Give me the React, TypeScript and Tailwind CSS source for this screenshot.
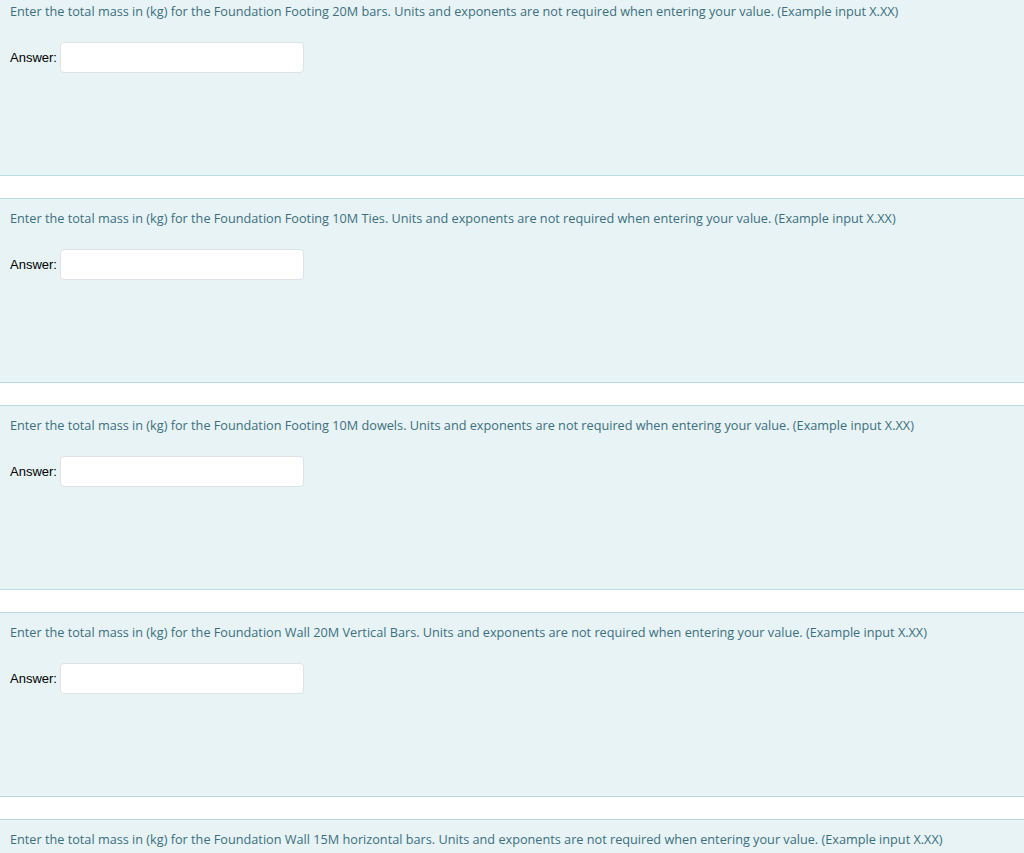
import React from "react";

const items = [
  "Foundation Footing 20M bars",
  "Foundation Footing 10M Ties",
  "Foundation Footing 10M dowels",
  "Foundation Wall 20M Vertical Bars",
  "Foundation Wall 15M horizontal bars",
];

export default function App() {
  return (
    <div className="w-[1024px] h-[853px] overflow-hidden bg-white">
      <div className="-mt-[9px] flex flex-col gap-[22px]">
        {items.map((name, i) => (
          <div
            key={i}
            className="h-[185px] shrink-0 border-y border-[#b8dce2] bg-[#e7f3f5] pl-[10px] pt-[9px]"
          >
            <div
              className="text-[12.7px] leading-[20px] text-[#3b6f80]"
              style={{ fontFamily: '"Open Sans", sans-serif' }}
            >
              Enter the total mass in (kg) for the {name}. Units and exponents are not required when entering your value. (Example input X.XX)
            </div>
            <div className="mt-[21px] flex items-center">
              <label
                className="w-[50px] text-[13px] text-black"
                style={{ fontFamily: '"Liberation Sans", Arial, sans-serif' }}
              >
                Answer:
              </label>
              <input
                type="text"
                className="h-[31px] w-[244px] rounded-[4px] border border-[#dee2e6] bg-white px-2 outline-none"
              />
            </div>
          </div>
        ))}
      </div>
    </div>
  );
}
